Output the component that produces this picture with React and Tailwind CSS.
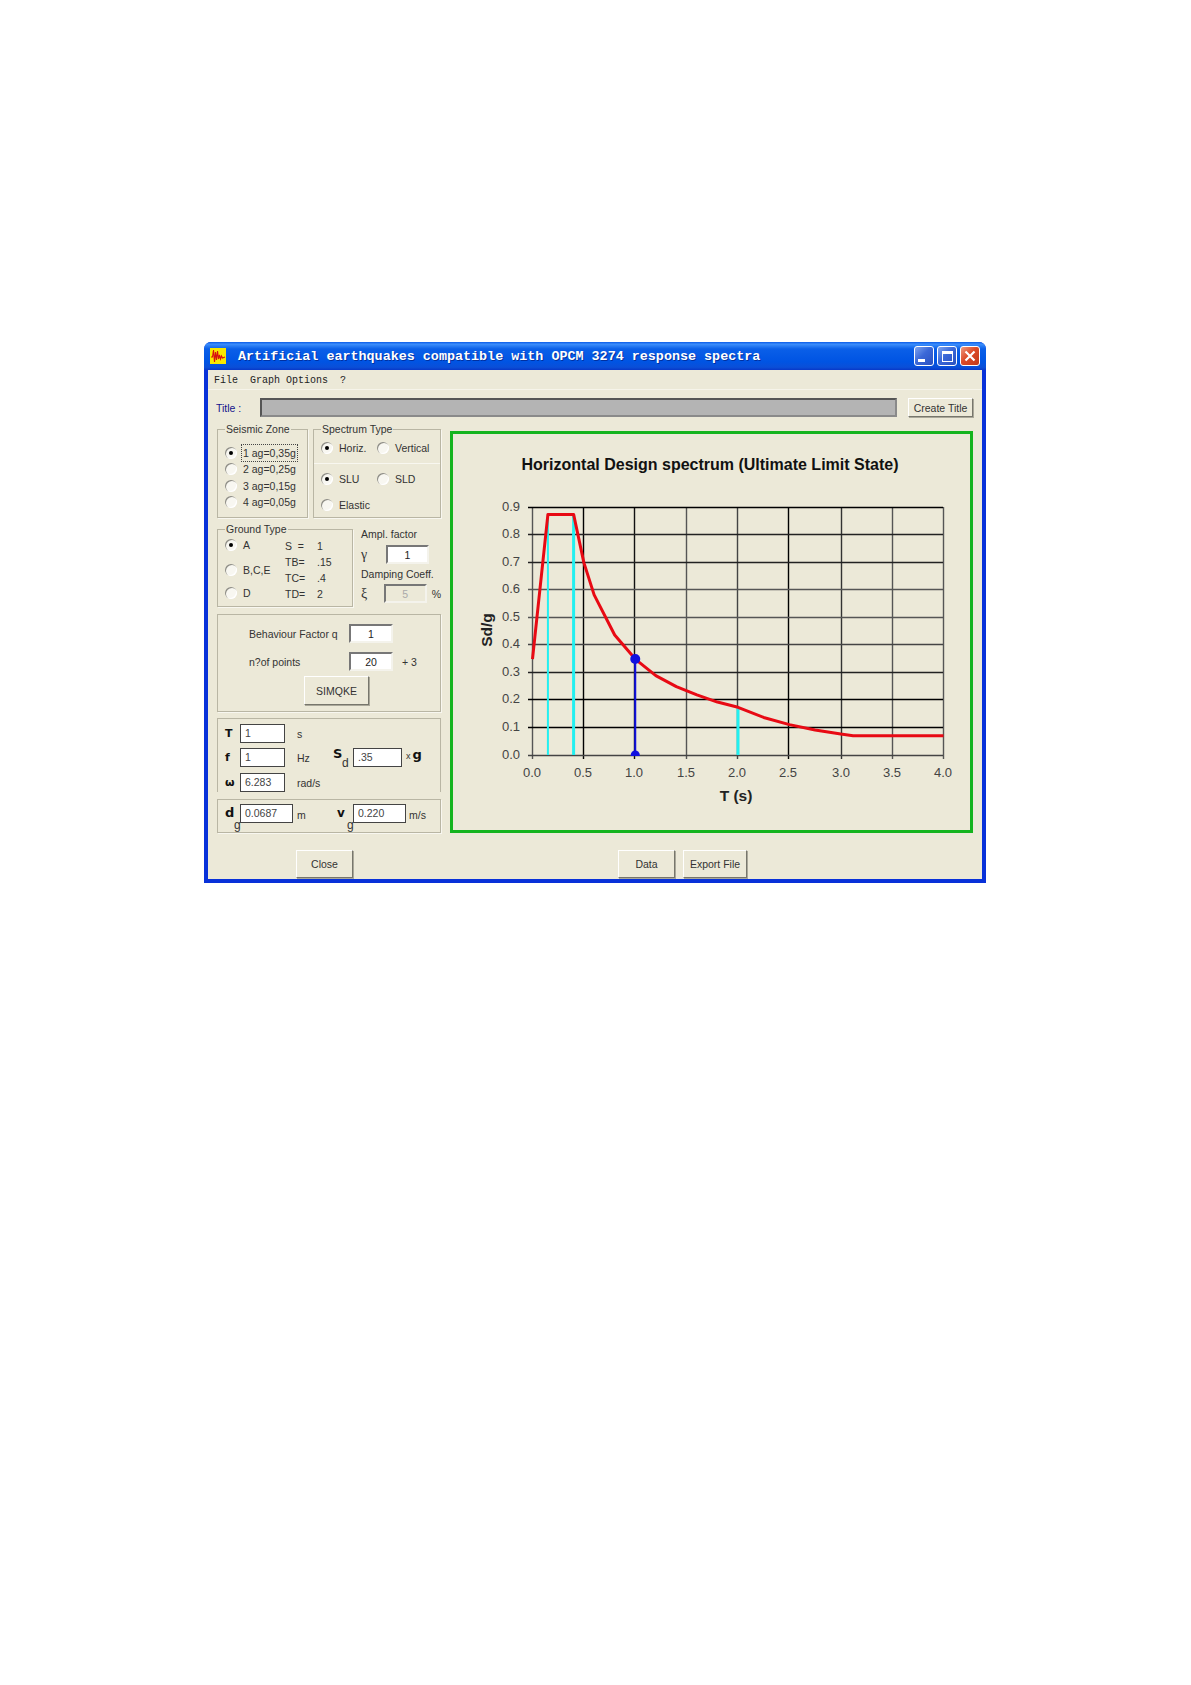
const SANS = 'font-["Liberation_Sans",Arial,sans-serif]'

const Radio = ({ checked }) => (
  <span className="relative flex w-3 h-3 shrink-0 items-center justify-center rounded-full bg-[#f8f7f1] shadow-[inset_1px_1px_0_#8d8c84,inset_-1px_-1px_0_#ffffff]">
    {checked && <span className="w-1 h-1 rounded-full bg-black" />}
  </span>
)

const Option = ({ label, checked, focus, className = '' }) => (
  <div className={`flex items-center h-4 gap-1.5 ${className}`}>
    <Radio checked={checked} />
    <span className={focus ? 'outline-1 outline-dotted outline-[#444] px-px -ml-px' : ''}>{label}</span>
  </div>
)

const Group = ({ title, className = '', children }) => (
  <div className={`relative border border-[#b9b6a4] shadow-[1px_1px_0_#f8f7f0] ${className}`}>
    {title && (
      <span className="absolute left-[7px] -top-[8px] px-px leading-[14px] bg-[#ece9d8]">{title}</span>
    )}
    {children}
  </div>
)

const Sunken = ({ children, className = '' }) => (
  <div className={`h-[19px] shrink-0 flex items-center justify-center bg-white border-2 border-t-[#777] border-l-[#777] border-r-[#f4f3ec] border-b-[#f4f3ec] ${className}`}>
    {children}
  </div>
)

const Boxed = ({ children, className = '' }) => (
  <div className={`h-[19px] shrink-0 flex items-center pl-1 pb-[2px] bg-white border border-[#444] text-[#444] ${className}`}>
    {children}
  </div>
)

const Raised = ({ children, className = '' }) => (
  <button className={`flex items-center justify-center bg-[#ece9d8] border border-t-white border-l-white border-r-[#77766c] border-b-[#77766c] shadow-[1px_1px_0_#aaa89a] ${className}`}>
    {children}
  </button>
)

const AppIcon = () => (
  <svg width="16" height="16" viewBox="0 0 16 16" className="shrink-0">
    <rect width="16" height="16" fill="#f8e800" />
    <path d="M1 9 L2.5 9 L3.5 2 L4.5 14 L5.5 4 L6.5 12 L7.5 3 L8.5 11 L9.5 7 L10.5 11 L11.5 8 L12.5 10 L15 9" fill="none" stroke="#d81010" strokeWidth="1.1" />
  </svg>
)

const WinButton = ({ kind }) => (
  <div className={`w-5 h-5 rounded-[3px] border border-white flex items-center justify-center ${kind === 'close' ? 'bg-[linear-gradient(135deg,#ee9a80,#dc4a28_45%,#c23a1a)]' : 'bg-[linear-gradient(135deg,#7ea4ee,#3b68d8_45%,#2a50c0)]'}`}>
    {kind === 'min' && <span className="w-[7px] h-[3px] bg-white mt-[9px] -ml-[6px]" />}
    {kind === 'max' && <span className="w-[11px] h-[11px] border border-white border-t-[3px]" />}
    {kind === 'close' && (
      <svg width="12" height="12" viewBox="0 0 12 12">
        <path d="M1.5 1.5 L10.5 10.5 M10.5 1.5 L1.5 10.5" stroke="#fff" strokeWidth="2.2" />
      </svg>
    )}
  </div>
)

// chart data, pixel positions read off the plot
const xs = [532, 583, 634, 686, 737, 788, 841, 892, 943]
const ys = [755, 727, 699, 672, 644, 617, 589, 562, 534, 507]
const xColors = ['#555', '#000', '#111', '#555', '#444', '#000', '#333', '#555', '#555']
const yColors = ['#444', '#000', '#000', '#222', '#444', '#555', '#555', '#222', '#222', '#000']
const px = (t) => 532.5 + (t * 411) / 4
const py = (v) => 755.5 - (v * 248) / 0.9
const curve = [
  [0, 0.35], [0.15, 0.875], [0.4, 0.875], [0.5, 0.7], [0.6, 0.583], [0.8, 0.4375], [1, 0.35],
  [1.2, 0.29], [1.4, 0.25], [1.6, 0.22], [1.8, 0.194], [2, 0.175], [2.25, 0.138], [2.5, 0.112],
  [2.75, 0.0926], [3, 0.0778], [3.12, 0.072], [4, 0.072],
]

const Chart = () => (
  <svg viewBox="453 434 517 396" className="w-full h-full block">
    <defs>
      <clipPath id="plot">
        <rect x="520" y="490" width="440" height="266" />
      </clipPath>
    </defs>
    <text x="710" y="470" textAnchor="middle" fontFamily="Liberation Sans" fontWeight="700" fontSize="16" fill="#111">
      Horizontal Design spectrum (Ultimate Limit State)
    </text>
    {xs.map((x, i) => (
      <line key={x} x1={x + 0.5} x2={x + 0.5} y1="507" y2="759" stroke={xColors[i]} strokeWidth="1.4" />
    ))}
    {ys.map((y, i) => (
      <line key={y} x1="528" x2="943" y1={y + 0.5} y2={y + 0.5} stroke={yColors[i]} strokeWidth="1.4" />
    ))}
    {ys.map((y, i) => (
      <text key={y} x="520" y={y + 4} textAnchor="end" fontFamily="Liberation Sans" fontSize="13" fill="#444">
        {(i / 10).toFixed(1)}
      </text>
    ))}
    {xs.map((x, i) => (
      <text key={x} x={x} y="777" textAnchor="middle" fontFamily="Liberation Sans" fontSize="13" fill="#444">
        {(i / 2).toFixed(1)}
      </text>
    ))}
    <text x="736" y="801" textAnchor="middle" fontFamily="Liberation Sans" fontWeight="700" fontSize="15.5" fill="#222">
      T (s)
    </text>
    <text transform="translate(492 630) rotate(-90)" textAnchor="middle" fontFamily="Liberation Sans" fontWeight="700" fontSize="15.5" fill="#222">
      Sd/g
    </text>
    <line x1={px(0.15)} x2={px(0.15)} y1={py(0.875)} y2="755" stroke="#22f0f0" strokeWidth="2" />
    <line x1={px(0.4)} x2={px(0.4)} y1={py(0.875)} y2="755" stroke="#22f0f0" strokeWidth="3" />
    <line x1={px(2)} x2={px(2)} y1={py(0.175)} y2="755" stroke="#22f0f0" strokeWidth="3" />
    <line x1={px(1)} x2={px(1)} y1={py(0.35)} y2="755" stroke="#1010e0" strokeWidth="2" />
    <polyline
      points={curve.map(([t, v]) => `${px(t)},${py(v)}`).join(' ')}
      fill="none"
      stroke="#e80a14"
      strokeWidth="3"
      strokeLinejoin="round"
    />
    <circle cx={px(1)} cy={py(0.35)} r="5" fill="#1010e0" />
    <circle cx={px(1)} cy="755" r="4.5" fill="#1010e0" clipPath="url(#plot)" />
  </svg>
)

const App = () => {
  return (
    <div className={`min-h-[1685px] bg-white pt-[342px] pl-[204px] text-[10.5px] leading-4 text-[#333] ${SANS}`}>
      <div className="w-[782px] h-[541px] flex flex-col rounded-t-[7px] overflow-hidden bg-[#0831d9]">
        {/* title bar */}
        <div className="h-[28px] shrink-0 flex items-center px-[6px] bg-[linear-gradient(180deg,#0a5be8_0%,#3b8dfb_8%,#0a5fe8_25%,#0054e3_70%,#0a4fd8_90%,#0838c8_100%)]">
          <AppIcon />
          <span className='ml-3 mt-px font-["Liberation_Mono",monospace] font-bold text-[13.4px] text-white whitespace-pre [text-shadow:1px_1px_0_#0030a0]'>
            Artificial earthquakes compatible with OPCM 3274 response spectra
          </span>
          <div className="ml-auto flex gap-[3px]">
            <WinButton kind="min" />
            <WinButton kind="max" />
            <WinButton kind="close" />
          </div>
        </div>

        {/* client area */}
        <div className="flex-1 mx-1 mb-1 bg-[#ece9d8] flex flex-col">
          <div className='h-5 shrink-0 flex items-center pt-[2px] pl-[6px] font-["Liberation_Mono",monospace] text-[10px] text-[#222] border-b border-[#f6f4ea]'>
            <span>File</span>
            <span className="ml-3">Graph Options</span>
            <span className="ml-3">?</span>
          </div>

          <div className="mt-2 flex items-center pl-2 h-[19px]">
            <span className="w-11 text-[#14148c]">Title :</span>
            <div className="w-[637px] h-[19px] bg-[#b4b4b4] border-2 border-t-[#555] border-l-[#555] border-r-[#8a8a8a] border-b-[#8a8a8a]" />
            <Raised className="ml-[11px] w-[65px] h-[19px]">Create Title</Raised>
          </div>

          <div className="mt-3 flex pl-[9px]">
            {/* left column */}
            <div className="w-[224px] shrink-0 flex flex-col">
              <div className="flex gap-[5px] h-[89px]">
                <Group title="Seismic Zone" className="w-[91px] shrink-0 pt-[15px] pl-[7px]">
                  <Option label="1 ag=0,35g" checked focus />
                  <Option label="2 ag=0,25g" />
                  <Option label="3 ag=0,15g" className="mt-px" />
                  <Option label="4 ag=0,05g" />
                </Group>
                <Group title="Spectrum Type" className="w-[128px] shrink-0 flex flex-col">
                  <div className="h-[34px] pt-[3px] pl-[7px] flex items-center border-b border-[#f8f7f0]">
                    <Option label="Horiz." checked className="w-[56px]" />
                    <Option label="Vertical" />
                  </div>
                  <div className="pt-[7px] pl-[7px]">
                    <div className="flex">
                      <Option label="SLU" checked className="w-[56px]" />
                      <Option label="SLD" />
                    </div>
                    <Option label="Elastic" className="mt-[10px]" />
                  </div>
                </Group>
              </div>

              <div className="mt-[9px] flex h-[80px]">
                <Group title="Ground Type" className="w-[136px] shrink-0 mt-[2px] flex pl-[7px] pt-[7px]">
                  <div className="w-[60px]">
                    <Option label="A" checked />
                    <Option label="B,C,E" className="mt-[9px]" />
                    <Option label="D" className="mt-[7px]" />
                  </div>
                  <div className="pt-px">
                    {[['S  =', '1'], ['TB=', '.15'], ['TC=', '.4'], ['TD=', '2']].map(([k, v]) => (
                      <div key={k} className="flex h-4 items-center whitespace-pre">
                        <span className="w-8">{k}</span>
                        <span>{v}</span>
                      </div>
                    ))}
                  </div>
                </Group>
                <div className="pl-2 flex-1 min-w-0">
                  <div className="h-3.5 leading-[14px]">Ampl. factor</div>
                  <div className="mt-1 flex items-center">
                    <span className='w-[25px] text-[14px] font-["Liberation_Serif",serif]'>γ</span>
                    <Sunken className="w-[43px] text-[#222]">1</Sunken>
                  </div>
                  <div className="mt-[3px] h-3.5 leading-[14px] whitespace-nowrap">Damping Coeff.</div>
                  <div className="mt-[3px] flex items-center">
                    <span className='w-[25px] text-[14px] font-["Liberation_Serif",serif]'>ξ</span>
                    <Sunken className="w-[43px] !bg-[#ece9d8] text-[#aaa]">5</Sunken>
                    <span className="ml-[5px]">%</span>
                  </div>
                </div>
              </div>

              <Group className="mt-[7px] h-[98px] pt-[9px] pl-[31px] flex flex-col">
                <div className="flex items-center">
                  <span className="w-[100px]">Behaviour Factor q</span>
                  <Sunken className="w-[44px] text-[#222]">1</Sunken>
                </div>
                <div className="mt-[9px] flex items-center">
                  <span className="w-[100px]">n?of points</span>
                  <Sunken className="w-[44px] text-[#222]">20</Sunken>
                  <span className="ml-[9px]">+ 3</span>
                </div>
                <Raised className="mt-[5px] ml-[55px] w-[65px] h-[29px]">SIMQKE</Raised>
              </Group>

              <div className="mt-[6px] h-[74px] border-x border-t border-[#b9b6a4] pt-[5px] pl-[7px] flex flex-col gap-[5px]">
                <div className="flex items-center h-[19px]">
                  <b className='w-[15px] font-["DejaVu_Sans",sans-serif] text-[11px] text-[#111]'>T</b>
                  <Boxed className="w-[45px]">1</Boxed>
                  <span className="ml-3">s</span>
                </div>
                <div className="flex items-center h-[19px]">
                  <b className='w-[15px] font-["DejaVu_Sans",sans-serif] text-[11px] text-[#111]'>f</b>
                  <Boxed className="w-[45px]">1</Boxed>
                  <span className="ml-3 w-[36px]">Hz</span>
                  <b className='w-[9px] font-["DejaVu_Sans",sans-serif] text-[13px] text-[#111] -mt-2'>S</b>
                  <span className="w-[11px] text-[12px] mt-[10px]">d</span>
                  <Boxed className="w-[49px]">.35</Boxed>
                  <span className="ml-1 text-[9px] -mt-1">x</span>
                  <b className='ml-[2px] font-["DejaVu_Sans",sans-serif] text-[13px] text-[#111] -mt-[6px]'>g</b>
                </div>
                <div className="flex items-center h-[19px] mt-px">
                  <b className='w-[15px] font-["DejaVu_Sans",sans-serif] text-[11px] text-[#111]'>ω</b>
                  <Boxed className="w-[45px]">6.283</Boxed>
                  <span className="ml-3">rad/s</span>
                </div>
              </div>

              <Group className="mt-[7px] h-[34px] pt-1 pl-[7px] flex items-start">
                <b className='w-[9px] h-[19px] font-["DejaVu_Sans",sans-serif] text-[13px] text-[#111] leading-[18px]'>d</b>
                <span className="w-[6px] text-[12px] mt-[13px]">g</span>
                <Boxed className="w-[53px]">0.0687</Boxed>
                <span className="ml-1 w-[40px] leading-[22px]">m</span>
                <b className='w-[10px] h-[19px] font-["DejaVu_Sans",sans-serif] text-[12px] text-[#111] leading-[18px]'>v</b>
                <span className="w-[6px] text-[12px] mt-[13px]">g</span>
                <Boxed className="w-[53px]">0.220</Boxed>
                <span className="ml-[3px] leading-[22px]">m/s</span>
              </Group>
            </div>

            {/* chart */}
            <div className="ml-[9px] mt-[2px] w-[523px] h-[402px] border-[3px] border-[#14b41e]">
              <Chart />
            </div>
          </div>

          {/* bottom buttons */}
          <div className="mt-[17px] flex pl-[88px]">
            <Raised className="w-[57px] h-[28px]">Close</Raised>
            <Raised className="ml-[265px] w-[57px] h-[28px]">Data</Raised>
            <Raised className="ml-2 w-[64px] h-[28px]">Export File</Raised>
          </div>
        </div>
      </div>
    </div>
  )
}

export default App
